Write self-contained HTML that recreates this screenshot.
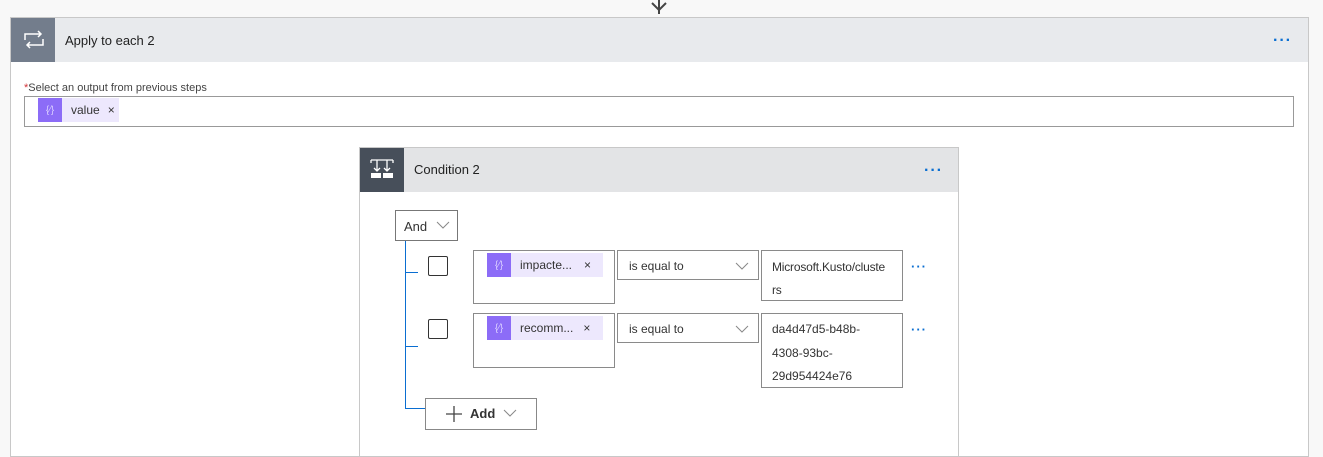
<!DOCTYPE html>
<html><head><style>
*{box-sizing:border-box;margin:0;padding:0}
body{width:1323px;height:450px;overflow:hidden;background:#f8f8f8;font-family:"Segoe UI","Liberation Sans",sans-serif;color:#333;position:relative;font-size:12px}
.a{position:absolute}
.tok{position:absolute;background:#ede8fd;height:24px;display:flex;align-items:center;font-size:12px;color:#333}
.tok .ic{width:24px;height:24px;background:#8c6cf7;color:#d8ccff;font-size:10px;display:flex;align-items:center;justify-content:center;margin-right:9px}
.box{position:absolute;border:1px solid #8a8a8a;background:#fff}
.dots{position:absolute;color:#0a6ed1;font-size:16px;letter-spacing:1px;font-weight:bold}
</style></head><body>
<svg class="a" style="left:648px;top:0" width="22" height="16"><path d="M4 3 L11 10 L18 3 M11 0 V14" stroke="#444" stroke-width="2" fill="none"/></svg>
<div class="a" style="left:10px;top:17px;width:1299px;height:440px;border:1px solid #c8c8c8;background:#fff"></div>
<div class="a" style="left:11px;top:18px;width:1297px;height:44px;background:#e8eaed"></div>
<div class="a" style="left:11px;top:18px;width:44px;height:44px;background:#737d8c"></div>
<svg class="a" style="left:22px;top:30px" width="24" height="20"><path d="M3 10 V4 H19 M16 1 L19 4 L16 7 M21 9 V15 H5 M8 12 L5 15 L8 18" stroke="#fff" stroke-width="1.5" fill="none"/></svg>
<div class="a" style="left:65px;top:33px;font-size:13px;color:#222">Apply to each 2</div>
<div class="dots" style="left:1273px;top:32px">···</div>
<div class="a" style="left:24px;top:82px;font-size:11px;color:#444"><span style="color:#d13438">*</span>Select an output from previous steps</div>
<div class="box" style="left:24px;top:96px;width:1270px;height:31px;border-color:#999"></div>
<div class="tok" style="left:38px;top:98px;width:81px"><div class="ic">{⁄}</div>value <span style="margin-left:8px">×</span></div>

<div class="a" style="left:359px;top:147px;width:600px;height:310px;border:1px solid #c8c8c8;background:#fff"></div>
<div class="a" style="left:360px;top:148px;width:598px;height:44px;background:#e3e4e6"></div>
<div class="a" style="left:360px;top:148px;width:44px;height:44px;background:#474f5a"></div>
<svg class="a" style="left:369px;top:157px" width="26" height="26"><path d="M2 3 H24 M2 3 V6 M24 3 V6 M8 3 V14 M18 3 V14 M5 11 L8 14 L11 11 M15 11 L18 14 L21 11" stroke="#fff" stroke-width="1.3" fill="none"/><rect x="2" y="16" width="10" height="5" fill="#fff"/><rect x="14" y="16" width="10" height="5" fill="#fff"/></svg>
<div class="a" style="left:414px;top:162px;font-size:13px;color:#222">Condition 2</div>
<div class="dots" style="left:924px;top:162px">···</div>

<div class="box" style="left:395px;top:210px;width:63px;height:31px;border-color:#777"></div>
<div class="a" style="left:404px;top:219px;font-size:13px">And</div>
<svg class="a" style="left:436px;top:221px" width="14" height="8"><path d="M1 1 L7 7 L13 1" stroke="#888" fill="none"/></svg>
<div class="a" style="left:405px;top:241px;width:1px;height:168px;background:#0a6ed1"></div>
<div class="a" style="left:405px;top:272px;width:13px;height:1px;background:#0a6ed1"></div>
<div class="a" style="left:405px;top:346px;width:13px;height:1px;background:#0a6ed1"></div>
<div class="a" style="left:405px;top:408px;width:20px;height:1px;background:#0a6ed1"></div>

<div class="a" style="left:428px;top:256px;width:20px;height:20px;border:1px solid #333;border-radius:2px"></div>
<div class="a" style="left:428px;top:319px;width:20px;height:20px;border:1px solid #333;border-radius:2px"></div>

<div class="box" style="left:473px;top:250px;width:142px;height:54px"></div>
<div class="tok" style="left:487px;top:253px;width:116px"><div class="ic">{⁄}</div>impacte... <span style="margin-left:12px">×</span></div>
<div class="box" style="left:473px;top:313px;width:142px;height:55px"></div>
<div class="tok" style="left:487px;top:316px;width:116px"><div class="ic">{⁄}</div>recomm... <span style="margin-left:10px">×</span></div>

<div class="box" style="left:617px;top:250px;width:142px;height:30px"></div>
<div class="a" style="left:629px;top:259px">is equal to</div>
<svg class="a" style="left:735px;top:262px" width="14" height="8"><path d="M1 1 L7 7 L13 1" stroke="#888" fill="none"/></svg>
<div class="box" style="left:617px;top:313px;width:142px;height:30px"></div>
<div class="a" style="left:629px;top:322px">is equal to</div>
<svg class="a" style="left:735px;top:325px" width="14" height="8"><path d="M1 1 L7 7 L13 1" stroke="#888" fill="none"/></svg>

<div class="box" style="left:761px;top:250px;width:142px;height:51px"></div>
<div class="a" style="left:772px;top:256px;line-height:23px;width:130px;letter-spacing:-0.2px">Microsoft.Kusto/cluste<br>rs</div>
<div class="box" style="left:761px;top:313px;width:142px;height:75px"></div>
<div class="a" style="left:772px;top:318px;line-height:23.5px">da4d47d5-b48b-<br>4308-93bc-<br>29d954424e76</div>
<div class="dots" style="left:911px;top:259px;font-size:13px">···</div>
<div class="dots" style="left:911px;top:322px;font-size:13px">···</div>

<div class="box" style="left:425px;top:398px;width:112px;height:32px;border-color:#888"></div>
<svg class="a" style="left:444px;top:404px" width="20" height="20"><path d="M10 2 V18 M2 10 H18" stroke="#444" stroke-width="1.3"/></svg>
<div class="a" style="left:470px;top:406px;font-size:13px;font-weight:600;color:#333">Add</div>
<svg class="a" style="left:503px;top:409px" width="14" height="8"><path d="M1 1 L7 7 L13 1" stroke="#888" fill="none"/></svg>
</body></html>
